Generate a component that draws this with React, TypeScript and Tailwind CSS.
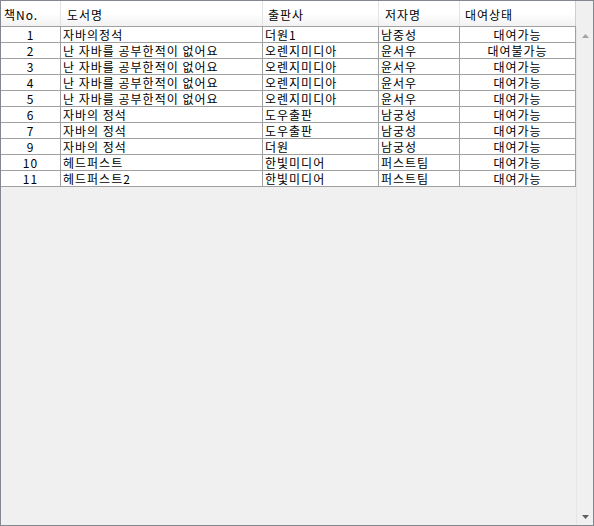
import React from 'react';

type Book = {
  no: number;
  title: string;
  publisher: string;
  author: string;
  status: string;
};

const books: Book[] = [
  { no: 1, title: '자바의정석', publisher: '더원1', author: '남중성', status: '대여가능' },
  { no: 2, title: '난 자바를 공부한적이 없어요', publisher: '오렌지미디아', author: '윤서우', status: '대여불가능' },
  { no: 3, title: '난 자바를 공부한적이 없어요', publisher: '오렌지미디아', author: '윤서우', status: '대여가능' },
  { no: 4, title: '난 자바를 공부한적이 없어요', publisher: '오렌지미디아', author: '윤서우', status: '대여가능' },
  { no: 5, title: '난 자바를 공부한적이 없어요', publisher: '오렌지미디아', author: '윤서우', status: '대여가능' },
  { no: 6, title: '자바의 정석', publisher: '도우출판', author: '남궁성', status: '대여가능' },
  { no: 7, title: '자바의 정석', publisher: '도우출판', author: '남궁성', status: '대여가능' },
  { no: 9, title: '자바의 정석', publisher: '더원', author: '남궁성', status: '대여가능' },
  { no: 10, title: '헤드퍼스트', publisher: '한빛미디어', author: '퍼스트팀', status: '대여가능' },
  { no: 11, title: '헤드퍼스트2', publisher: '한빛미디어', author: '퍼스트팀', status: '대여가능' },
];

const cell = 'h-full border-r border-[#a0a0a0] px-[2px] whitespace-nowrap leading-[15px]';

export default function App() {
  return (
    <div
      className="w-[594px] h-[526px] border border-[#828790] bg-[#f0f0f0] flex text-[12px] tracking-[1px] text-black"
      style={{ fontFamily: '"Noto Sans CJK KR", "Liberation Sans", sans-serif' }}
    >
      <div className="w-[575px] flex flex-col">
        {/* header */}
        <div className="h-[26px] flex border-b border-[#a0a0a0] bg-gradient-to-b from-white via-white to-[#f2f2f2] leading-[15px]">
          <div className="w-[60px] border-r border-[#e3e3e3] pl-[3px] pt-[6px]">책No.</div>
          <div className="w-[202px] border-r border-[#e3e3e3] pl-[6px] pt-[6px]">도서명</div>
          <div className="w-[116px] border-r border-[#e3e3e3] pl-[5px] pt-[6px]">출판사</div>
          <div className="w-[81px] border-r border-[#e3e3e3] pl-[6px] pt-[6px]">저자명</div>
          <div className="w-[116px] border-r border-[#cfcfcf] pl-[5px] pt-[6px]">대여상태</div>
        </div>
        {/* rows */}
        {books.map((b) => (
          <div key={b.no} className="h-[16px] flex border-b border-[#a0a0a0] bg-white">
            <div className={`w-[60px] text-center ${cell}`}>{b.no}</div>
            <div className={`w-[202px] ${cell}`}>{b.title}</div>
            <div className={`w-[116px] ${cell}`}>{b.publisher}</div>
            <div className={`w-[81px] ${cell}`}>{b.author}</div>
            <div className={`w-[116px] text-center ${cell}`}>{b.status}</div>
          </div>
        ))}
      </div>
      {/* vertical scrollbar */}
      <div className="flex-1 flex flex-col">
        <div className="h-[26px] bg-[#f0f0f0]" />
        <div className="flex-1 flex flex-col border-l border-[#e6e6e6] bg-[#f0f0f0]">
          <div className="h-[17px] flex items-center justify-center">
            <svg width="7" height="4" viewBox="0 0 7 4">
              <path d="M3.5 0 L7 4 L0 4 Z" fill="#a3a3a3" />
            </svg>
          </div>
          <div className="flex-1" />
          <div className="h-[17px] flex items-center justify-center">
            <svg width="7" height="4" viewBox="0 0 7 4">
              <path d="M0 0 L7 0 L3.5 4 Z" fill="#606060" />
            </svg>
          </div>
        </div>
      </div>
    </div>
  );
}
